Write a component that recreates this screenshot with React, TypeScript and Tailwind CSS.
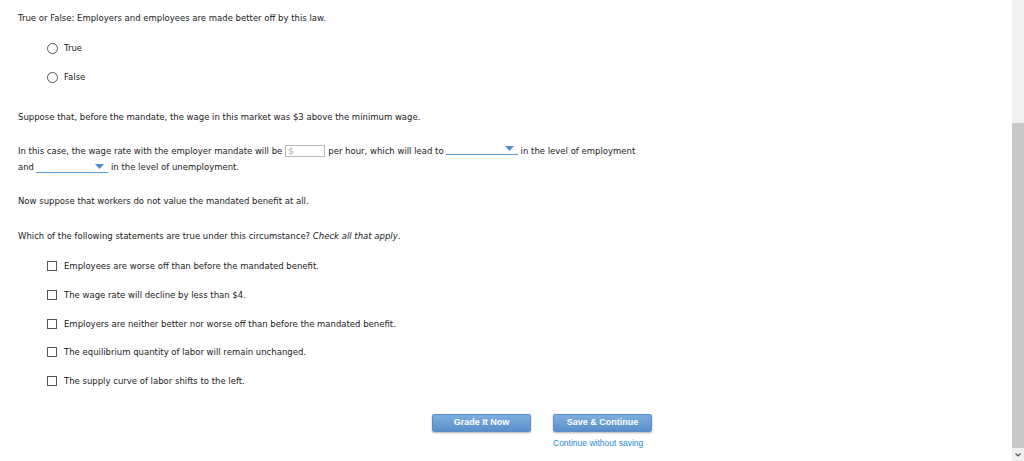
import React from "react";

const font = { fontFamily: '"DejaVu Sans", Verdana, sans-serif' };

function Radio({ label, mt }: { label: string; mt: string }) {
  return (
    <div className={`flex h-[12px] items-center pl-[29px] ${mt}`}>
      <span className="box-border h-[11px] w-[11px] rounded-full border border-[#555] bg-white" />
      <span className="ml-[6px]">{label}</span>
    </div>
  );
}

function Check({ label, mt }: { label: string; mt: string }) {
  return (
    <div className={`flex h-[12px] items-center pl-[29px] ${mt}`}>
      <span className="box-border h-[10px] w-[10px] border border-[#555] bg-white" />
      <span className="ml-[7px]">{label}</span>
    </div>
  );
}

function Drop({ w }: { w: string }) {
  return (
    <span className={`relative inline-flex h-[12px] ${w} items-center border-b border-[#5b9bd5]`}>
      <svg className="absolute right-[4px] top-[3px]" width="9" height="5" viewBox="0 0 9 5">
        <polygon points="0,0 9,0 4.5,5" fill="#4a8fd4" />
      </svg>
    </span>
  );
}

const btn =
  "box-border flex h-[18px] w-[99px] items-center justify-center rounded-[2px] border border-[#5f8fc4] bg-gradient-to-b from-[#7eaee0] to-[#5a8fcb] text-[9px] font-bold text-white shadow-[0_1px_2px_rgba(0,0,0,0.3)]";

export default function App() {
  return (
    <div className="flex h-[461px] w-[1024px] overflow-hidden bg-white text-[8.5px] text-[#222]" style={font}>
      <div className="flex flex-1 flex-col pl-[18px]">
        <div className="mt-[12px] flex h-[12px] items-center">
          True or False: Employers and employees are made better off by this law.
        </div>
        <Radio label="True" mt="mt-[18px]" />
        <Radio label="False" mt="mt-[17px]" />
        <div className="mt-[28px] flex h-[12px] items-center">
          Suppose that, before the mandate, the wage in this market was $3 above the minimum wage.
        </div>
        <div className="mt-[22px] flex h-[12px] items-center whitespace-pre">
          <span>In this case, the wage rate with the employer mandate will be</span>
          <span className="ml-[3px] box-border flex h-[12px] w-[40px] items-center border border-[#bbb] pl-[2px] text-[#aaa]">$</span>
          <span className="ml-[3px]">per hour, which will lead to</span>
          <span className="ml-[2px]"><Drop w="w-[72px]" /></span>
          <span className="ml-[3px]">in the level of employment</span>
        </div>
        <div className="mt-[4px] flex h-[12px] items-center whitespace-pre">
          <span className="w-[18px]">and</span>
          <Drop w="w-[72px]" />
          <span className="ml-[3px]">in the level of unemployment.</span>
        </div>
        <div className="mt-[22px] flex h-[12px] items-center">
          Now suppose that workers do not value the mandated benefit at all.
        </div>
        <div className="mt-[23px] flex h-[12px] items-center whitespace-pre">
          Which of the following statements are true under this circumstance? <i>Check all that apply</i>.
        </div>
        <Check label="Employees are worse off than before the mandated benefit." mt="mt-[18px]" />
        <Check label="The wage rate will decline by less than $4." mt="mt-[17px]" />
        <Check label="Employers are neither better nor worse off than before the mandated benefit." mt="mt-[17px]" />
        <Check label="The equilibrium quantity of labor will remain unchanged." mt="mt-[16px]" />
        <Check label="The supply curve of labor shifts to the left." mt="mt-[17px]" />
        <div className="mt-[27px] flex pl-[414px]" style={{ fontFamily: '"Liberation Sans", Arial, sans-serif' }}>
          <button className={btn}>Grade It Now</button>
          <div className="ml-[22px] flex flex-col">
            <button className={btn}>Save &amp; Continue</button>
            <span className="mt-[5px] flex h-[12px] items-center text-[8.5px] text-[#1e8ad6]">Continue without saving</span>
          </div>
        </div>
      </div>
      <div className="flex w-[12px] flex-col">
        <div className="h-[123px] bg-[#f0f0f0]" />
        <div className="flex-1 bg-[#c8c8c8]" />
        <div className="flex h-[13px] items-center justify-center bg-[#f0f0f0]">
          <svg width="6" height="4" viewBox="0 0 6 4">
            <polyline points="0.5,0.5 3,3 5.5,0.5" fill="none" stroke="#555" strokeWidth="1.2" />
          </svg>
        </div>
      </div>
    </div>
  );
}
